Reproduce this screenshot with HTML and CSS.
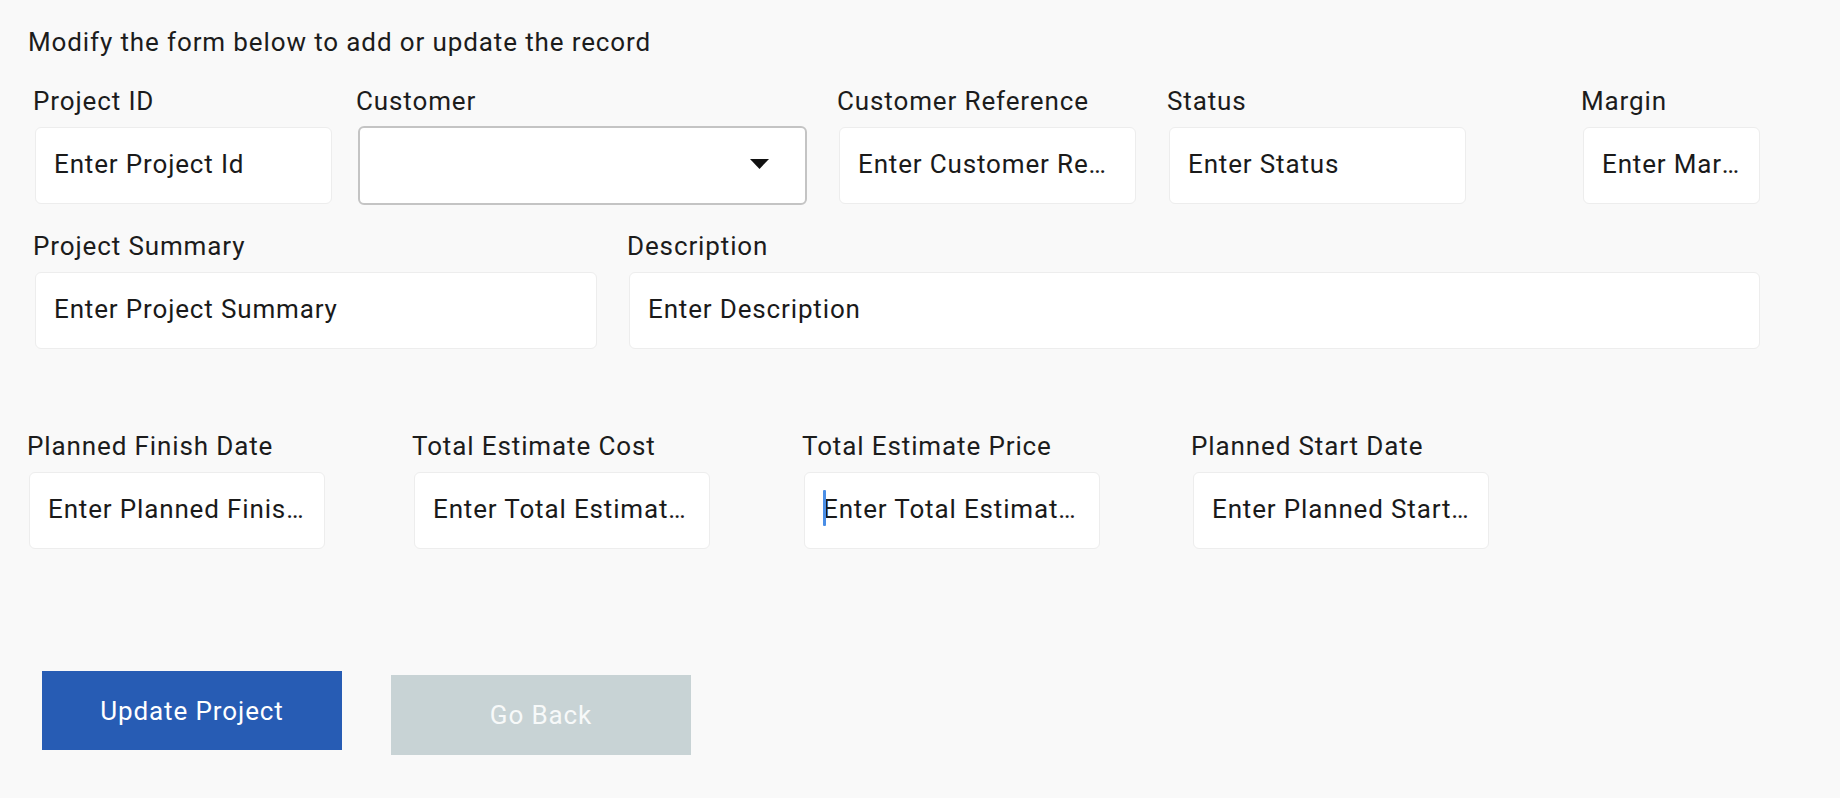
FILE: index.html
```html
<!DOCTYPE html>
<html lang="en">
<head>
<meta charset="utf-8">
<title>Update Project</title>
<link rel="stylesheet" href="styles.css">
</head>
<body>
<main class="page">
  <p class="intro">Modify the form below to add or update the record</p>

  <div class="row row-a">
    <div class="field f-pid">
      <label class="label">Project ID</label>
      <div class="input w-297"><span class="txt">Enter Project Id</span></div>
    </div>
    <div class="field f-customer">
      <label class="label">Customer</label>
      <div class="select">
        <svg class="arrow" width="19" height="10" viewBox="0 0 19 10"><path d="M0 0 H19 L9.5 10 Z" fill="#111"/></svg>
      </div>
    </div>
    <div class="field f-cref">
      <label class="label">Customer Reference</label>
      <div class="input w-297 tight"><span class="txt">Enter Customer Reference</span></div>
    </div>
    <div class="field f-status">
      <label class="label">Status</label>
      <div class="input w-297"><span class="txt">Enter Status</span></div>
    </div>
    <div class="field f-margin">
      <label class="label">Margin</label>
      <div class="input w-177"><span class="txt">Enter Margin</span></div>
    </div>
  </div>

  <div class="row row-b">
    <div class="field f-summary">
      <label class="label">Project Summary</label>
      <div class="input w-562"><span class="txt">Enter Project Summary</span></div>
    </div>
    <div class="field f-desc">
      <label class="label">Description</label>
      <div class="input w-1131"><span class="txt">Enter Description</span></div>
    </div>
  </div>

  <div class="row row-c">
    <div class="field f-c1">
      <label class="label">Planned Finish Date</label>
      <div class="input w-296"><span class="txt">Enter Planned Finish Date</span></div>
    </div>
    <div class="field f-c2">
      <label class="label">Total Estimate Cost</label>
      <div class="input w-296"><span class="txt">Enter Total Estimate Cost</span></div>
    </div>
    <div class="field f-c3">
      <label class="label">Total Estimate Price</label>
      <div class="input w-296 focused"><span class="caret"></span><span class="txt">Enter Total Estimate Price</span></div>
    </div>
    <div class="field f-c4">
      <label class="label">Planned Start Date</label>
      <div class="input w-296"><span class="txt">Enter Planned Start Date</span></div>
    </div>
  </div>

  <div class="actions">
    <button class="btn btn-primary" type="button">Update Project</button>
    <button class="btn btn-back" type="button">Go Back</button>
  </div>
</main>
</body>
</html>
```

FILE: styles.css
```css
html, body {
  margin: 0;
  padding: 0;
  background: #f9f9f9;
}

body {
  font-family: Roboto, "Liberation Sans", Arial, sans-serif;
  color: #1c1c1c;
  font-size: 26px;
}

.page {
  padding: 27px 0 0 27px;
}

.intro {
  margin: 0 0 29px 1px;
  line-height: 30px;
  font-size: 26px;
  letter-spacing: 0.88px;
}

.row {
  display: flex;
  align-items: flex-start;
}

.row-a {
  padding-left: 6px;
  margin-bottom: 26px;
}

.row-b {
  padding-left: 6px;
  margin-bottom: 82px;
}

.row-c {
  margin-bottom: 122px;
}

.field {
  display: flex;
  flex-direction: column;
  align-items: flex-start;
  flex: none;
}

.label {
  display: block;
  line-height: 30px;
  margin-bottom: 11px;
  white-space: nowrap;
  letter-spacing: 0.88px;
}

.f-pid { width: 323px; }
.f-customer { width: 481px; }
.f-cref { width: 330px; }
.f-status { width: 414px; }
.f-margin { width: 179px; }

.f-summary { width: 594px; }
.f-desc { width: 1133px; }

.f-c1 { width: 385px; }
.f-c2 { width: 390px; }
.f-c3 { width: 389px; }
.f-c4 { width: 298px; }

.input {
  position: relative;
  box-sizing: border-box;
  height: 77px;
  margin-left: 2px;
  background: #ffffff;
  border: 1px solid #ededed;
  border-radius: 6px;
  padding: 0 18px 4px 18px;
  display: flex;
  align-items: center;
  overflow: hidden;
}

.input.tight {
  padding-right: 28px;
}

.txt {
  display: block;
  min-width: 0;
  line-height: 30px;
  white-space: nowrap;
  overflow: hidden;
  text-overflow: ellipsis;
  color: #1a1a1a;
  letter-spacing: 0.85px;
}

.w-297 { width: 297px; }
.w-296 { width: 296px; }
.w-177 { width: 177px; }
.w-562 { width: 562px; }
.w-1131 { width: 1131px; }

.caret {
  position: absolute;
  left: 18px;
  top: 17px;
  width: 3px;
  height: 36px;
  border-radius: 1px;
  background: #4a8ee6;
}

.select {
  box-sizing: border-box;
  width: 449px;
  height: 79px;
  margin: -1px 0 0 2px;
  background: #ffffff;
  border: 2px solid #c4c4c4;
  border-radius: 6px;
  display: flex;
  align-items: center;
  justify-content: flex-end;
  padding: 0 36px 3px 0;
}

.arrow {
  display: block;
}

.actions {
  display: flex;
  align-items: flex-start;
  gap: 49px;
  margin-left: 15px;
}

.btn {
  box-sizing: border-box;
  width: 300px;
  border: none;
  border-radius: 0;
  font-family: Roboto, "Liberation Sans", Arial, sans-serif;
  font-size: 26px;
  line-height: 30px;
  letter-spacing: 0.9px;
  color: #ffffff;
  padding: 0;
  cursor: pointer;
}

.btn-primary {
  height: 79px;
  background: #275cb4;
}

.btn-back {
  height: 80px;
  margin-top: 4px;
  background: #c8d3d5;
  color: #f7f9f9;
}
```
